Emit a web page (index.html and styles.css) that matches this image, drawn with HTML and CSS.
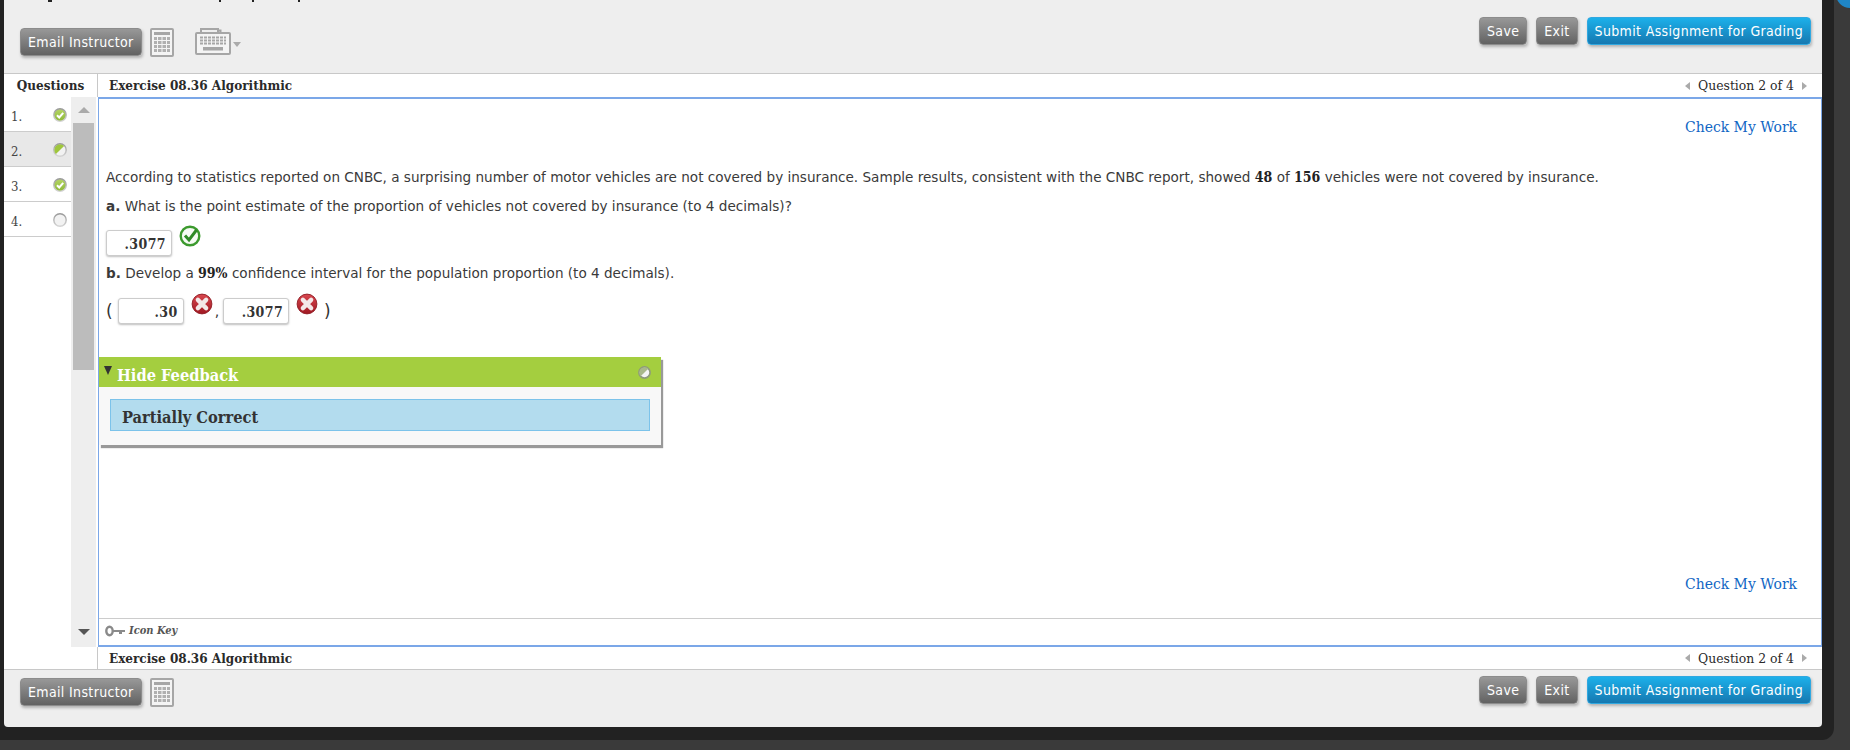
FILE: index.html
```html
<!DOCTYPE html>
<html lang="en">
<head>
<meta charset="utf-8">
<title>Exercise 08.36 Algorithmic</title>
<link rel="stylesheet" href="styles.css">
</head>
<body>
<svg class="defs" width="0" height="0" aria-hidden="true">
  <defs>
    <linearGradient id="okfill" x1="0" y1="0" x2="0" y2="1"><stop offset="0" stop-color="#b6d667"/><stop offset="1" stop-color="#8db836"/></linearGradient>
    <linearGradient id="ring" x1="0" y1="0" x2="0" y2="1"><stop offset="0" stop-color="#9a9a9a"/><stop offset="1" stop-color="#d4d4d4"/></linearGradient>
    <linearGradient id="redfill" x1="0" y1="0" x2="0" y2="1"><stop offset="0" stop-color="#d8474f"/><stop offset="1" stop-color="#a01822"/></linearGradient>
    <symbol id="calc" viewBox="0 0 24 29">
      <rect x="1" y="1" width="22" height="27" rx="1" fill="#f4f4f4" stroke="#a6a6a6" stroke-width="2"/>
      <rect x="4" y="4" width="16" height="3" fill="#a6a6a6"/>
      <path d="M4 9h3v3H4zM8 9h3.500v3H8zM12.500 9H16v3h-3.500zM17 9h3v3h-3zM4 13h3v3H4zM8 13h3.500v3H8zM12.500 13H16v3h-3.500zM17 13h3v3h-3zM4 17h3v3H4zM8 17h3.500v3H8zM12.500 17H16v3h-3.500zM17 17h3v3h-3zM4 21h3v3H4zM8 21h3.500v3H8zM12.500 21H16v3h-3.500zM17 21h3v3h-3z" fill="#b0b0b0"/>
    </symbol>
    <symbol id="ok" viewBox="0 0 14 14">
      <circle cx="7" cy="7" r="6.200" fill="url(#okfill)" stroke="url(#ring)" stroke-width="1.400"/>
      <path d="M4 7.300l2.200 2.200L10.200 4.800" fill="none" stroke="#fff" stroke-width="2"/>
    </symbol>
    <symbol id="half" viewBox="0 0 14 14">
      <circle cx="7" cy="7" r="6.200" fill="#f2f2f2" stroke="url(#ring)" stroke-width="1.400"/>
      <path d="M2.900 11.100A5.800 5.800 0 0 1 11.100 2.900z" fill="#9fc63c"/>
    </symbol>
    <symbol id="half-dark" viewBox="0 0 14 14">
      <circle cx="7" cy="7" r="6" fill="#f4f4f4" stroke="#8e9a7a" stroke-width="1.800"/>
      <path d="M2.900 11.100A5.800 5.800 0 0 1 11.100 2.900z" fill="#a8b88a"/>
    </symbol>
    <symbol id="wrong" viewBox="0 0 24 24">
      <circle cx="12" cy="12" r="10.800" fill="url(#redfill)" stroke="#8f1a22" stroke-width="1"/>
      <path d="M7.500 7.500l9 9M16.500 7.500l-9 9" stroke="#f3e8e8" stroke-width="4.800" stroke-linecap="round"/>
    </symbol>
    <symbol id="right" viewBox="0 0 22 22">
      <circle cx="11" cy="11" r="9.300" fill="#f6fbf4" stroke="#3c9a2e" stroke-width="2.400"/>
      <path d="M6 10.500l4 4.500 7.500-10" fill="none" stroke="#2f8a26" stroke-width="3"/>
    </symbol>
  </defs>
</svg>

<div class="window">
  <header class="toolbar toolbar-top">
    <div class="tool-left">
      <button class="btn">Email Instructor</button>
      <svg class="calc"><use href="#calc"/></svg>
      <span class="kbd">
        <svg class="kbd-icon" viewBox="0 0 36 28">
          <path d="M6 6V2h17v4M23 3.500h2.500V6" fill="none" stroke="#a6a6a6" stroke-width="2"/>
          <rect x="1" y="6" width="34" height="21" rx="1" fill="#f4f4f4" stroke="#a6a6a6" stroke-width="2"/>
          <path d="M5 10.500h26M5 13.500h26M5 16.500h26" stroke="#a6a6a6" stroke-width="2" stroke-dasharray="3 1"/>
          <rect x="8" y="20" width="20" height="3.500" fill="#a6a6a6"/>
        </svg>
        <i class="caret"></i>
      </span>
    </div>
    <div class="tool-right">
      <button class="btn">Save</button>
      <button class="btn">Exit</button>
      <button class="btn btn-blue">Submit Assignment for Grading</button>
    </div>
  </header>

  <div class="title-row title-row-top">
    <div class="title-side">Questions</div>
    <div class="title-main">
      <span class="ex-name">Exercise 08.36 Algorithmic</span>
      <span class="q-nav"><i class="tri tri-l"></i>Question 2 of 4<i class="tri tri-r"></i></span>
    </div>
  </div>

  <div class="middle">
    <aside class="side">
      <ul class="q-list">
        <li class="q-item"><span>1.</span><svg class="q-ico"><use href="#ok"/></svg></li>
        <li class="q-item q-current"><span>2.</span><svg class="q-ico"><use href="#half"/></svg></li>
        <li class="q-item"><span>3.</span><svg class="q-ico"><use href="#ok"/></svg></li>
        <li class="q-item"><span>4.</span><svg class="q-ico" viewBox="0 0 14 14"><circle cx="7" cy="7" r="6.200" fill="#f2f2f2" stroke="url(#ring)" stroke-width="1.400"/></svg></li>
      </ul>
      <div class="scroll">
        <i class="sc-up"></i>
        <div class="sc-thumb"></div>
        <i class="sc-down"></i>
      </div>
    </aside>

    <main class="frame">
      <div class="content">
        <div class="check"><a class="check-link">Check My Work</a></div>
        <p class="para">According to statistics reported on CNBC, a surprising number of motor vehicles are not covered by insurance. Sample results, consistent with the CNBC report, showed <b class="num">48</b> of <b class="num">156</b> vehicles were not covered by insurance.</p>
        <p class="para para-a"><b>a.</b> What is the point estimate of the proportion of vehicles not covered by insurance (to 4 decimals)?</p>
        <div class="answer-row answer-a">
          <span class="field">.3077</span><svg class="mark-ok"><use href="#right"/></svg>
        </div>
        <p class="para para-b"><b>b.</b> Develop a <b class="num">99%</b> confidence interval for the population proportion (to 4 decimals).</p>
        <div class="answer-row answer-b">
          <span class="paren">(</span>
          <span class="field">.30</span><svg class="mark-x"><use href="#wrong"/></svg><span class="comma">,</span>
          <span class="field">.3077</span><svg class="mark-x"><use href="#wrong"/></svg>
          <span class="paren">)</span>
        </div>
        <section class="feedback">
          <div class="fb-head">
            <i class="fb-tri"></i><span class="fb-title">Hide Feedback</span>
            <svg class="fb-ico"><use href="#half-dark"/></svg>
          </div>
          <div class="fb-body">
            <div class="fb-msg">Partially Correct</div>
          </div>
        </section>
        <div class="check check-bottom"><a class="check-link">Check My Work</a></div>
      </div>
      <div class="key">
        <svg class="key-ico" viewBox="0 0 20 12"><ellipse cx="4.500" cy="6" rx="3.200" ry="4.200" fill="none" stroke="#8a8a8a" stroke-width="2.400"/><path d="M8 5h12v2h-3v2h-3V7H8z" fill="#8a8a8a"/></svg>
        <em class="key-text">Icon Key</em>
      </div>
    </main>
  </div>

  <div class="title-row title-row-bottom">
    <div class="title-side"></div>
    <div class="title-main">
      <span class="ex-name">Exercise 08.36 Algorithmic</span>
      <span class="q-nav"><i class="tri tri-l"></i>Question 2 of 4<i class="tri tri-r"></i></span>
    </div>
  </div>

  <footer class="toolbar toolbar-bottom">
    <div class="tool-left">
      <button class="btn">Email Instructor</button>
      <svg class="calc"><use href="#calc"/></svg>
    </div>
    <div class="tool-right">
      <button class="btn">Save</button>
      <button class="btn">Exit</button>
      <button class="btn btn-blue">Submit Assignment for Grading</button>
    </div>
  </footer>
</div>
<div class="corner-dot"></div>
</body>
</html>
```

FILE: styles.css
```css
* { box-sizing: border-box; }
html, body { margin: 0; height: 100%; }
body {
  width: 1850px;
  height: 750px;
  overflow: hidden;
  position: relative;
  background: #3a3a3a;
  font-family: "DejaVu Sans", sans-serif;
  color: #333;
}
.defs { display: block; height: 0; }
.corner-dot {
  position: absolute;
  right: -14px;
  top: -20px;
  width: 28px;
  height: 28px;
  border-radius: 50%;
  background: #1f86c6;
}
.window {
  width: 1834px;
  height: 740px;
  background: #222;
  border-radius: 0 0 12px 0;
  padding: 0 12px 13px 4px;
  display: flex;
  flex-direction: column;
}
.toolbar {
  background: #eee;
  display: flex;
  justify-content: space-between;
  flex: none;
}
.toolbar-top {
  height: 73px;
  padding: 17px 11px 0 16px;
  background-color: #eee;
  background-image:
    linear-gradient(#222, #222), linear-gradient(#222, #222),
    linear-gradient(#222, #222), linear-gradient(#222, #222);
  background-repeat: no-repeat;
  background-size: 4px 2px, 2px 2px, 2px 2px, 2px 2px;
  background-position: 44px 0, 215px 0, 248px 0, 294px 0;
}
.toolbar-bottom { height: 57px; padding: 8px 11px 0 16px; border-radius: 0 0 4px 4px; }
.tool-left { display: flex; align-items: flex-start; }
.tool-right { display: flex; align-items: flex-start; gap: 9px; }
.toolbar-bottom .tool-right { margin-top: -2px; }
.toolbar-top .tool-left { padding-top: 11px; }
.btn {
  height: 28px;
  padding: 0 7px;
  border: 1px solid #8c8c8c;
  border-radius: 4px;
  background: linear-gradient(#989898, #626262);
  color: #fff;
  font: 14px "DejaVu Sans Condensed", "DejaVu Sans", sans-serif;
  letter-spacing: .35px;
  box-shadow: 1px 2px 3px rgba(0,0,0,.25);
}
.btn-blue {
  background: linear-gradient(#1cb0ea, #1678b0);
  border-color: #30a8e0;
}
.calc { width: 24px; height: 29px; margin-left: 8px; }
.kbd { display: flex; align-items: flex-end; margin-left: 21px; margin-top: -1px; }
.kbd-icon { width: 36px; height: 28px; }
.caret {
  width: 0; height: 0;
  margin: 0 0 8px 2px;
  border: 4px solid transparent;
  border-top: 5px solid #aaa;
  border-bottom: 0;
}
.title-row {
  display: flex;
  background: #fff;
  flex: none;
  height: 24px;
  border-top: 1px solid #c8c8c8;
  font: bold 13.400px/23px "DejaVu Serif Condensed", "DejaVu Serif", serif;
  color: #2a2a2a;
}
.title-row-bottom { height: 23px; border-top: 0; border-bottom: 1px solid #c8c8c8; }
.title-side { width: 94px; flex: none; border-right: 1px solid #c8c8c8; text-align: center; }
.title-main { flex: 1; display: flex; justify-content: space-between; padding: 0 15px 0 11px; }
.q-nav { font-weight: normal; font-size: 13.800px; display: flex; align-items: center; }
.tri { width: 0; height: 0; border: 4px solid transparent; }
.tri-l { border-right: 5px solid #aaa; border-left: 0; margin-right: 8px; }
.tri-r { border-left: 5px solid #aaa; border-right: 0; margin-left: 8px; }
.middle { flex: 1; display: flex; min-height: 0; background: #fff; }
.side { width: 94px; flex: none; display: flex; }
.q-list { list-style: none; margin: 0; padding: 0; width: 67px; }
.q-item {
  height: 35px;
  display: flex;
  align-items: center;
  justify-content: space-between;
  padding: 2px 4px 0 7px;
  border-bottom: 1px solid #ccc;
  font: 13px "DejaVu Serif Condensed", "DejaVu Serif", serif;
  color: #444;
}
.q-item span { padding-top: 2px; }
.q-current { background: #e8e8e8; }
.q-ico { width: 14px; height: 14px; }
.scroll {
  width: 27px;
  background: #eee;
  border-right: 2px solid #fff;
  position: relative;
  display: flex;
  flex-direction: column;
  align-items: center;
}
.sc-up { width: 0; height: 0; margin-top: 10px; border: 6px solid transparent; border-top: 0; border-bottom: 6px solid #aaa; }
.sc-thumb { width: 21px; height: 247px; background: #bcbcbc; margin-top: 10px; }
.sc-down { width: 0; height: 0; margin-top: auto; margin-bottom: 12px; border: 6px solid transparent; border-bottom: 0; border-top: 6px solid #555; }
.frame {
  flex: 1;
  min-width: 0;
  display: flex;
  flex-direction: column;
  border: 2px solid #7ba7e8;
  border-width: 2px 1px 2px 1px;
}
.content { flex: 1; display: flex; flex-direction: column; min-height: 0; }
.check { text-align: right; padding: 18px 24px 0 0; flex: none; }
.check-link { font: 15.500px/20px "DejaVu Serif Condensed", "DejaVu Serif", serif; color: #1166c4; }
.check-bottom { margin-top: auto; padding: 0 24px 24px 0; }
.para { margin: 0; padding-left: 7px; font-size: 13.580px; line-height: 18px; color: #3a3a3a; white-space: nowrap; }
.para:first-of-type { margin-top: 31px; }
.para-a { margin-top: 11px; }
.para-b { margin-top: 8px; }
.num { font-family: "DejaVu Serif Condensed", "DejaVu Serif", serif; font-size: 14px; color: #222; }
.answer-row { display: flex; align-items: flex-start; padding-left: 7px; }
.answer-a { margin-top: 15px; height: 26px; }
.answer-b { margin-top: 16px; height: 26px; }
.field {
  width: 66px;
  height: 26px;
  background: #fff;
  border: 1px solid #ccc;
  border-radius: 3px;
  box-shadow: 0 1px 2px rgba(0,0,0,.25);
  font: bold 14px/27px "DejaVu Serif Condensed", "DejaVu Serif", serif;
  letter-spacing: .4px;
  text-align: right;
  padding-right: 5px;
  color: #333;
}
.mark-ok { width: 22px; height: 22px; margin: -5px 0 0 7px; }
.mark-x { width: 22px; height: 22px; margin: -5px 0 0 7px; }
.comma { margin: 5px 4px 0 2px; font-size: 14px; }
.paren { font-size: 17px; line-height: 26px; margin-right: 5px; }
.mark-x + .paren { margin: 0 0 0 6px; }
.feedback {
  width: 562px;
  height: 88px;
  margin-top: 33px;
  background: #f8f8f8;
  box-shadow: 2px 3px 1px #999;
  flex: none;
}
.fb-head {
  height: 30px;
  background: #a4ce3f;
  display: flex;
  align-items: center;
  position: relative;
  padding-left: 18px;
}
.fb-tri { position: absolute; left: 5px; top: 9px; width: 0; height: 0; border: 4px solid transparent; border-top: 9px solid #333; border-bottom: 0; }
.fb-title { font: bold 16.300px "DejaVu Serif Condensed", "DejaVu Serif", serif; color: #fff; padding-top: 6px; }
.fb-ico { position: absolute; right: 10px; top: 9px; width: 13px; height: 13px; }
.fb-body { padding: 12px 11px 0 11px; }
.fb-msg {
  height: 32px;
  background: #b3dcee;
  border: 1px solid #7cc3ea;
  padding-left: 11px;
  font: bold 16.300px/36px "DejaVu Serif Condensed", "DejaVu Serif", serif;
  color: #333;
  overflow: hidden;
}
.key {
  height: 27px;
  flex: none;
  border-top: 1px solid #ccc;
  display: flex;
  align-items: center;
  padding: 0 0 3px 6px;
}
.key-ico { width: 20px; height: 12px; }
.key-text { margin-left: 4px; font: italic bold 11px "DejaVu Serif Condensed", "DejaVu Serif", serif; color: #555; }
```
